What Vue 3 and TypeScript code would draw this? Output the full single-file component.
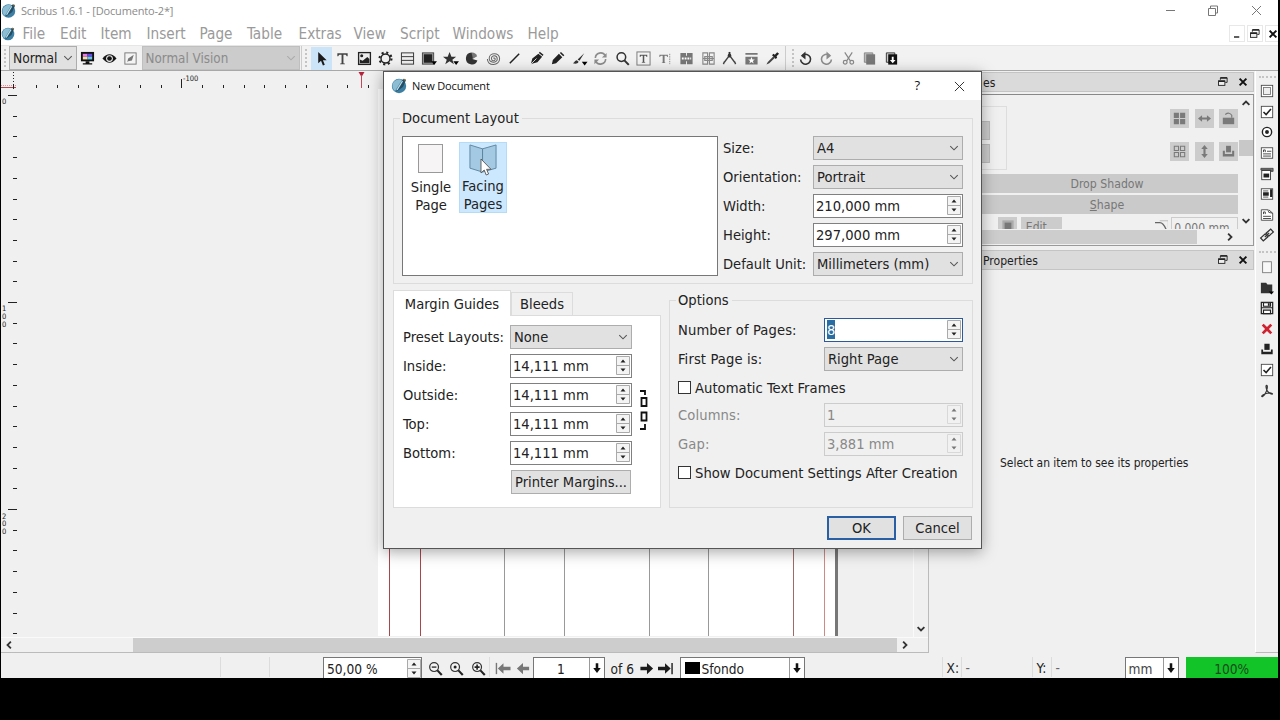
<script setup lang="ts">
const icons: Record<string, string> = {
  logo: '<circle cx="8" cy="8" r="7.2" fill="#3d7fa3"/><path d="M2 5a7 7 0 0 1 9-3L4 13A7 7 0 0 1 2 5z" fill="#8cbdd2"/><path d="M5 14L12 1l3 1-3 7z" fill="#244e66"/><path d="M6 12l5.500-9" stroke="#c4e2ea" stroke-width="1.200"/><path d="M12.500 .5l2.500 1-1 2" fill="#8a7142"/>',
  preview: '<rect x="1" y="1" width="14" height="10" fill="#111"/><path d="M3 3h5v3H3z" fill="#e879e8"/><path d="M8 3h5v3H8z" fill="#6a4be8"/><path d="M3 6h5v3H3z" fill="#f3dcaa"/><path d="M8 6h5v3H8z" fill="#65c8e8"/><path d="M6 11h4v2h3v1.500H3V13h3z" fill="#111"/>',
  eye: '<path d="M.5 8Q8-1 15.500 8 8 17 .5 8z" fill="#151515"/><circle cx="8" cy="8" r="3.600" fill="#eee"/><circle cx="8" cy="8" r="2.500" fill="#151515"/>',
  edit: '<rect x="2" y="2" width="12" height="12" fill="#f4f4f4" stroke="#777"/><path d="M4.500 12l1-4 6-4-2 6-4 1z" fill="#777"/>',
  arrow: '<path d="M4.500 1v12l3-2.600 2 5 2-.8-2-4.800h4z" fill="#1a1a1a"/>',
  text: '<path d="M2.500 2.500h11v3.200h-1c-.3-1.300-.7-1.800-2-1.800H9v8.600c0 .7.6.8 1.500.9v.7h-5v-.7c.9-.1 1.500-.2 1.500-.9V3.900H5.500c-1.300 0-1.700.5-2 1.800h-1z" fill="#444"/>',
  image: '<rect x="1.700" y="1.700" width="12.600" height="12.600" fill="#eee" stroke="#222" stroke-width="1.400"/><circle cx="5" cy="5" r="1.600" fill="#222"/><path d="M3 13V9l3 1.500 5-4 2.200 2V13z" fill="#222"/>',
  gear: '<circle cx="8" cy="8" r="4.800" fill="none" stroke="#222" stroke-width="1.500"/><circle cx="8" cy="8" r="6.400" fill="none" stroke="#222" stroke-width="2.200" stroke-dasharray="2.200 2.827"/>',
  table: '<rect x="1.500" y="2" width="13" height="12" fill="#eee" stroke="#333"/><path d="M1.500 6h13M1.500 10h13" stroke="#333"/>',
  rect: '<rect x="1.500" y="2" width="12" height="12" fill="#aaa" stroke="#444"/><rect x="3" y="3.500" width="9" height="9" fill="#222"/><path d="M11 11h6l-3 4z" fill="#000"/>',
  star: '<path d="M7 1l2 5h5l-4 3.200 1.600 5L7 11l-4.600 3.200L4 9.200 0 6h5z" fill="#333"/><path d="M11 11h6l-3 4z" fill="#000"/>',
  arc: '<path d="M8 1.700A6.300 6.300 0 1 0 14.300 10L9 8.500 11 6z" fill="#333"/><path d="M8 1.700a6 6 0 0 1 6 4L9.500 8.200z" fill="#777"/>',
  spiral: '<path d="M8 8c0-1 1.800-.8 1.800.6 0 2.600-4 2.400-4-.6C5.800 3.800 12 4 12 8.400c0 5-8.600 4.600-8.600-.6C3.400 1.400 14.500 1 14.500 8.200 14.500 12 11.500 14.500 8 14.500 4 14.500 1.500 12 1.500 8.500" fill="none" stroke="#666" stroke-width="1.100"/>',
  line: '<path d="M3 13L13 3" stroke="#222" stroke-width="1.600"/>',
  bezier: '<path d="M2 14l1.500-6L10 3l4 3-5 6-5 1.200z" fill="#222"/><path d="M2 14l6-6" stroke="#ddd"/><path d="M11 1.500l4 3.200" stroke="#222" stroke-width="1.500"/>',
  pencil: '<path d="M2 14l1-4.500L9.500 3l3.600 3.600L6.500 13zM10.500 2l1.200-1 3.600 3.600-1.200 1z" fill="#222"/>',
  brush: '<path d="M1 13c2-.2 2-3.500 4.500-3L7 11.500C6 14 3 13.800 1 13zM6 9l7-6.500L8 10.500z" fill="#333"/><path d="M10.500 11.500h6l-3 4z" fill="#000"/>',
  rotate: '<path d="M2.500 7.500A5.600 5.600 0 0 1 13 5M13.500 8.500A5.600 5.600 0 0 1 3 11" fill="none" stroke="#8c8c8c" stroke-width="1.700"/><path d="M14.500 2v5h-5zM1.500 14V9h5z" fill="#8c8c8c"/>',
  zoom: '<circle cx="6.800" cy="6.500" r="4.600" fill="none" stroke="#333" stroke-width="1.600"/><path d="M10 10l4.700 4.800" stroke="#333" stroke-width="2.200"/>',
  textbox: '<rect x="1" y="1" width="14" height="14" fill="#f4f4f4" stroke="#777"/><path d="M4 4h8v2.500h-.7c-.3-1-.5-1.400-1.500-1.400h-1v6c0 .6.4.7 1 .8v.5H6.200v-.5c.6-.1 1-.2 1-.8v-6h-1c-1 0-1.200.4-1.500 1.400H4z" fill="#555"/>',
  textedit: '<path d="M1.500 4h9v2.500h-.7c-.3-1-.5-1.400-1.500-1.400H7v6.500c0 .6.4.7 1 .8v.5H4v-.5c.6-.1 1-.2 1-.8V5.100H3.700c-1 0-1.200.4-1.500 1.400h-.7z" fill="#777"/><path d="M12.500 3v11" stroke="#888" stroke-dasharray="1.500 1"/>',
  link: '<path d="M1.500 2h6v3h1V2h6v12h-6v-3h-1v3h-6z" fill="#777"/><path d="M3 8h10" stroke="#fff" stroke-width="2" stroke-dasharray="2 1"/>',
  unlink: '<path d="M2 2h5v12H2zM9 2h5v12H9zM4 6h8v4H4zM2 8h12" fill="none" stroke="#888" stroke-width="1.200"/>',
  measure: '<path d="M8 1v4" stroke="#333" stroke-width="2"/><circle cx="8" cy="5" r="2" fill="#333"/><path d="M7 6l-4.500 6M9 6l4.500 6M2.500 11.500L1.500 14M13.500 11.500l1 2.500" stroke="#444" stroke-width="1.500"/>',
  copyprops: '<path d="M1.500 2h13v2h-13zM1.500 6h13v8.500h-13z" fill="#777"/><path d="M8 6.500l1 2.500h2.500l-2 1.700.8 2.600L8 11.800l-2.300 1.500.8-2.600-2-1.700H7z" fill="#fff"/>',
  dropper: '<path d="M9 3l1.500 1L13 1.300 15 3l-2.700 2.600L13 7l-1.500 1.500-4-4z" fill="#222"/><path d="M9 5.500l1.700 1.700L4.500 13l-3 1.500L3 11.600z" fill="#444"/>',
  undo: '<path d="M5 4.500A5.300 5.300 0 1 1 2.800 9" fill="none" stroke="#333" stroke-width="1.700"/><path d="M3 5l5-4.500V9z" fill="#333"/>',
  redo: '<path d="M11 4.500A5.300 5.300 0 1 0 13.200 9" fill="none" stroke="#8c8c8c" stroke-width="1.700"/><path d="M13 5L8 .5V9z" fill="#8c8c8c"/>',
  cut: '<path d="M4 1.500l6 9M12 1.500l-6 9" stroke="#888" stroke-width="1.300"/><circle cx="4.500" cy="12" r="2" fill="none" stroke="#888" stroke-width="1.300"/><circle cx="11.500" cy="12" r="2" fill="none" stroke="#888" stroke-width="1.300"/>',
  copy: '<path d="M2.500 2h9v10h-9z" fill="#bbb" stroke="#888"/><rect x="4.500" y="3.500" width="9.500" height="11" fill="#777"/>',
  paste: '<path d="M2.500 2h9v10h-9z" fill="#ccc" stroke="#333"/><rect x="4.500" y="3.500" width="9.500" height="11" fill="#111"/><path d="M8.300 6h2v3.500h2L9.300 13 6.300 9.500h2z" fill="#fff"/>',
  frame: '<rect x="1.500" y="1.500" width="13" height="13" fill="#fff" stroke="#444"/><rect x="4" y="4" width="8" height="8" fill="#eee" stroke="#777"/>',
  check: '<rect x="1.500" y="1.500" width="13" height="13" fill="#fff" stroke="#444"/><path d="M4 8l3 3 5.500-6.500" fill="none" stroke="#222" stroke-width="1.800"/>',
  radio: '<circle cx="8" cy="8" r="5.300" fill="#fff" stroke="#222" stroke-width="1.600"/><circle cx="8" cy="8" r="2.200" fill="#222"/>',
  field: '<rect x="1.500" y="2" width="13" height="12" fill="#fff" stroke="#444"/><path d="M4 7V4.500h2V7M8 6h5M3.500 9h9M3.500 11.500h9" fill="none" stroke="#333"/>',
  combo: '<rect x="2" y="4" width="10" height="10.500" fill="#fff" stroke="#333"/><path d="M1 1.500h14V5h-2.500V3.500H1z" fill="#777" stroke="#333" stroke-width=".8"/><path d="M4 7.500h6.500v4.500H4z" fill="#222"/>',
  listbox: '<rect x="1.500" y="2" width="13" height="12" fill="#fff" stroke="#444"/><path d="M3.500 4.500h6M3.500 11.500h6" stroke="#444"/><path d="M3.500 6h6.500v4H3.500zM11.500 2.500h2.500v9h-2.500z" fill="#222"/>',
  annot: '<path d="M1.500 2H9l1 3 4.500 1v8h-13z" fill="#fff" stroke="#444"/><path d="M4 7V4.500h2V7M3.500 9.500h9M3.500 12h9M10 2l4.500 4" stroke="#333" fill="none"/>',
  chain: '<g fill="none" stroke="#333" stroke-width="1.400"><rect x="7.500" y="3" width="7" height="4.500" transform="rotate(-42 11 5)"/><rect x="1.500" y="8.500" width="7" height="4.500" transform="rotate(-42 5 11)"/><path d="M5.500 10.500l5-5"/></g>',
  page: '<rect x="3" y="2" width="10" height="12.500" fill="#f8f8f8" stroke="#777"/>',
  folder: '<path d="M1 2h6l1.500 2H14v10H1z" fill="#333"/><path d="M10 12h6l-3 3.500z" fill="#000"/>',
  save: '<path d="M1.500 1.500h13v13h-13z" fill="#eee" stroke="#222" stroke-width="1.400"/><path d="M4 2h8v4H4zM1.500 7.700h13M4 10.500h8v4H4z" stroke="#222" fill="#fff" stroke-width="1.300"/><path d="M9 2.500h2v3H9z" fill="#222"/>',
  close: '<path d="M2 4l2.200-2L8 5.800 11.800 2 14 4l-3.800 4 3.800 4-2.200 2L8 10.200 4.200 14 2 12l3.800-4z" fill="#cf2231"/>',
  print: '<path d="M5 2h6v7H5z" fill="#222"/><path d="M1.500 8.500h2V11h9V8.500h2V14h-13z" fill="#222"/>',
  printGray: '<path d="M5 1h6v8H5z" fill="#777"/><path d="M1 7h2.500v4h9V7H15v7H1z" fill="#777"/>',
  pdf: '<path d="M7.500 1.500c1.800 0 .6 6 -1.500 9.500-1.500 2.500-3.500 4-4 3.200-.5-.9 3-3 6.500-3.700 3-.6 5.700-.3 5.800.6.1 1.200-4-.1-6-3.200C6.800 5 6.400 1.500 7.500 1.500z" fill="none" stroke="#333" stroke-width="1.300"/>',
  tiles: '<path d="M1 1h6.300v6.300H1zM8.700 1H15v6.300H8.700zM1 8.700h6.300V15H1zM8.700 8.700H15V15H8.700z" fill="#7a7a7a"/>',
  tilesOut: '<path d="M1.600 1.600h5.200v5.200H1.600zM9.200 1.600h5.200v5.200H9.200zM1.600 9.200h5.200v5.200H1.600zM9.200 9.200h5.200v5.200H9.200z" fill="none" stroke="#7a7a7a" stroke-width="1.300"/>',
  hflip: '<path d="M0 8l5-4v2.700h6V4l5 4-5 4V9.300H5V12z" fill="#7a7a7a"/>',
  vflip: '<path d="M8 0l4 5H9.300v6H12l-4 5-4-5h2.700V5H4z" fill="#7a7a7a"/>',
  lock: '<path d="M1 7h14v8H1z" fill="#7a7a7a"/><path d="M4 3q5-3.500 8 1v3" fill="none" stroke="#7a7a7a" stroke-width="1.400"/>',
  float: '<path d="M4.500 5V2.500h9v6H11" fill="none" stroke="#222" stroke-width="1.200"/><path d="M4.500 2.500h9" stroke="#222" stroke-width="2"/><rect x="2" y="6.500" width="8.500" height="6" fill="#eee" stroke="#222" stroke-width="1.200"/><path d="M2 7h8.500" stroke="#222" stroke-width="2"/>',
  xbold: '<path d="M3.500 3.500l9 9M12.500 3.500l-9 9" stroke="#111" stroke-width="2.600"/>',
  down: '<path d="M3 5.500L8 10.500l5-5" fill="none" stroke="currentColor" stroke-width="1.400"/>',
  downB: '<path d="M3.500 5.500L8 10l4.500-4.500" fill="none" stroke="#333" stroke-width="2.400"/>',
  upB: '<path d="M3.500 10.500L8 6l4.500 4.500" fill="none" stroke="#333" stroke-width="2.400"/>',
  leftB: '<path d="M10.500 3.500L6 8l4.500 4.500" fill="none" stroke="#333" stroke-width="2.400"/>',
  rightB: '<path d="M5.500 3.500L10 8l-4.500 4.500" fill="none" stroke="#333" stroke-width="2.400"/>',
  downFat: '<path d="M6.300 1.500h3.400V8h3.300L8 14.500 3 8h3.300z" fill="#111"/>',
  zoomOut: '<circle cx="6.500" cy="6.500" r="4.700" fill="#f4f4f4" stroke="#333" stroke-width="1.300"/><path d="M4 6.500h5" stroke="#333" stroke-width="1.500"/><path d="M10 10l4.700 5" stroke="#222" stroke-width="2.200"/>',
  zoomOne: '<circle cx="6.500" cy="6.500" r="4.700" fill="#f4f4f4" stroke="#333" stroke-width="1.300"/><circle cx="6.500" cy="6.500" r="1.600" fill="#222"/><path d="M10 10l4.700 5" stroke="#222" stroke-width="2.200"/>',
  zoomIn: '<circle cx="6.500" cy="6.500" r="4.700" fill="#f4f4f4" stroke="#333" stroke-width="1.300"/><path d="M3.800 6.500h5.400M6.500 3.800v5.400" stroke="#222" stroke-width="1.700"/><path d="M10 10l4.700 5" stroke="#222" stroke-width="2.200"/>',
  first: '<path d="M1 2v12" stroke="#777" stroke-width="1.500"/><path d="M2.500 8l6-5.500v3.700h7.500v3.600H8.500v3.700z" fill="#777"/>',
  prev: '<path d="M1.500 8L8 2v4.200h6.500v3.600H8V14z" fill="#777"/>',
  next: '<path d="M15 8L8.500 2v4.200H1.500v3.600h7V14z" fill="#1c1c1c"/>',
  last: '<path d="M15 2v12" stroke="#1c1c1c" stroke-width="1.500"/><path d="M13.500 8L7.500 2.500v3.700H0v3.600h7.500v3.700z" fill="#1c1c1c"/>',
}

const menus = [
  ['File', 37.5], ['Edit', 40.5], ['Item', 46], ['Insert', 53], ['Page', 47.5], ['Table', 51.5],
  ['Extras', 55], ['View', 46.5], ['Script', 52.5], ['Windows', 75], ['Help', 40],
] as [string, number][]

const tools = ['arrow', 'text', 'image', 'gear', 'table', 'rect', 'star', 'arc', 'spiral', 'line', 'bezier', 'pencil', 'brush', 'rotate', 'zoom', 'textbox', 'textedit', 'link', 'unlink', 'measure', 'copyprops', 'dropper']
const editTools = ['undo', 'redo', 'cut', 'copy', 'paste']
const pdfTools = ['frame', 'check', 'radio', 'field', 'combo', 'listbox', 'annot', 'chain']
const fileTools = ['page', 'folder', 'save', 'close', 'print', 'check', 'pdf']

interface Row { label: string; value: string; kind: 'combo' | 'spin' }
const sizeRows: Row[] = [
  { label: 'Size:', value: 'A4', kind: 'combo' },
  { label: 'Orientation:', value: 'Portrait', kind: 'combo' },
  { label: 'Width:', value: '210,000 mm', kind: 'spin' },
  { label: 'Height:', value: '297,000 mm', kind: 'spin' },
  { label: 'Default Unit:', value: 'Millimeters (mm)', kind: 'combo' },
]
const marginRows: Row[] = [
  { label: 'Preset Layouts:', value: 'None', kind: 'combo' },
  { label: 'Inside:', value: '14,111 mm', kind: 'spin' },
  { label: 'Outside:', value: '14,111 mm', kind: 'spin' },
  { label: 'Top:', value: '14,111 mm', kind: 'spin' },
  { label: 'Bottom:', value: '14,111 mm', kind: 'spin' },
]
const hTicks = Array.from({ length: 17 }, (_, i) => ({ x: Math.round(35 + i * 20.75) + 0.5, major: i === 7 }))
const vTicks = Array.from({ length: 27 }, (_, i) => ({ y: Math.round(24 + i * 20.7) + 0.5, major: i % 10 === 0 }))
const vLabels = [['0', 33], ['1', 240], ['0', 248], ['0', 255.5], ['2', 447.5], ['0', 455], ['0', 462.5]] as [string, number][]
const guides = [
  { x: 388, c: '#a8464c' }, { x: 419, c: '#a8464c' }, { x: 503, c: '#999' }, { x: 563, c: '#999' },
  { x: 648, c: '#999' }, { x: 707, c: '#999' }, { x: 792, c: '#a06a6a' }, { x: 823, c: '#cf8a85' },
]
</script>

<template>
  <div class="screen">
    <div class="window">
      <div class="titlebar">
        <svg class="ic logo" viewBox="0 0 16 16" v-html="icons.logo" />
        <span class="title">Scribus 1.6.1 - [Documento-2*]</span>
        <svg class="winbtns" viewBox="0 0 100 20" fill="none" stroke="#777">
          <path d="M6 9.500h9M48.500 7.500h7v7h-7zM50.500 7v-2h7v7h-2M92 5l9 9M101 5l-9 9" />
        </svg>
      </div>
      <div class="menubar">
        <svg class="ic logo" viewBox="0 0 16 16" v-html="icons.logo" />
        <nav>
          <span v-for="m in menus" :key="m[0]" :style="{ width: m[1] + 'px' }">{{ m[0] }}</span>
        </nav>
        <div class="mdi">
          <span><svg class="i12" viewBox="0 0 16 16"><path d="M4 12h7" stroke="#555" stroke-width="2.500" /></svg></span>
          <span><svg class="i12" viewBox="0 0 16 16" v-html="icons.float" /></span>
          <span><svg class="i12" viewBox="0 0 16 16" v-html="icons.xbold" /></span>
        </div>
      </div>
      <div class="toolbar">
        <i class="grip" />
        <div class="combo normal"><span>Normal</span><svg class="i12" viewBox="0 0 16 16" v-html="icons.down" /></div>
        <div class="tool"><svg class="ic" viewBox="0 0 16 16" v-html="icons.preview" /></div>
        <div class="tool"><svg class="ic" viewBox="0 0 16 16" v-html="icons.eye" /></div>
        <div class="tool"><svg class="ic" viewBox="0 0 16 16" v-html="icons.edit" /></div>
        <div class="combo vision"><span>Normal Vision</span><svg class="i12" viewBox="0 0 16 16" v-html="icons.down" /></div>
        <i class="sep" /><i class="grip g2" />
        <div v-for="t in tools" :key="t" class="tool" :class="{ active: t === 'arrow' }">
          <svg class="ic" viewBox="0 0 16 16" v-html="icons[t]" />
        </div>
        <i class="sep s2" /><i class="grip g3" />
        <div v-for="t in editTools" :key="t" class="tool"><svg class="ic" viewBox="0 0 16 16" v-html="icons[t]" /></div>
      </div>

      <div class="main">
        <div class="canvas">
          <div class="view">
            <svg class="drawing" width="912" height="565" viewBox="0 0 912 565">
              <rect x="377" y="0" width="458" height="565" fill="#fff" />
              <rect x="834" y="0" width="3" height="565" fill="#777" />
              <rect v-for="g in guides" :key="g.x" :x="g.x" y="0" width="1" height="565" :fill="g.c" />
              <rect x="0" y="0" width="912" height="18" fill="#f0f0f0" />
              <path d="M12.500 1v16" stroke="#222" stroke-dasharray="1 2" />
              <path d="M0 14.500h15" stroke="#d89a9a" stroke-dasharray="1 1" />
              <path d="M0 16.500h15" stroke="#b8474d" />
              <path d="M12.500 13v5" stroke="#222" />
              <path v-for="t in hTicks" :key="t.x" :d="`M${t.x} ${t.major ? 8 : 14}v${t.major ? 9 : 3}`" stroke="#222" />
              <text x="182" y="10" font-size="7.500" fill="#222">-100</text>
              <path d="M357.500 1h6l-3 5z" fill="#b3233b" /><path d="M360.500 4v13" stroke="#c4475a" />
              <path v-for="t in vTicks" :key="t.y" :d="`M${t.major ? 7 : 12} ${t.y}h${t.major ? 9 : 4}`" stroke="#222" />
              <text v-for="(l, i) in vLabels" :key="i" x="1" :y="l[1]" font-size="7.500" fill="#222">{{ l[0] }}</text>
            </svg>
            <div class="vscroll"><svg class="i12" viewBox="0 0 16 16" v-html="icons.downB" /></div>
          </div>
          <div class="hscroll">
            <svg class="i12" viewBox="0 0 16 16" v-html="icons.leftB" /><i />
            <svg class="i12" viewBox="0 0 16 16" v-html="icons.rightB" />
          </div>
        </div>

        <div class="docks">
          <div class="dockhead"><span>es</span>
            <svg class="i12" viewBox="0 0 16 16" v-html="icons.float" /><svg class="i12" viewBox="0 0 16 16" v-html="icons.xbold" />
          </div>
          <div class="dockbody">
            <div class="dockcontent">
              <div class="xyz">
                <div class="groupbox"><span /><span /></div>
                <div class="btngrid">
                  <span v-for="b in ['tiles', 'hflip', 'lock', 'tilesOut', 'vflip', 'printGray']" :key="b"><svg class="ic" viewBox="0 0 16 16" v-html="icons[b]" /></span>
                </div>
              </div>
              <div class="section">Drop Shadow</div>
              <div class="section"><u>S</u>hape</div>
              <div class="shaperow">
                <b><svg class="i12" viewBox="0 0 16 16"><rect x="2" y="2" width="12" height="12" fill="#777" stroke="#aaa" stroke-width="3" /></svg></b>
                <b class="edit">Edit...</b>
                <svg class="curve" viewBox="0 0 14 12"><path d="M0 2.500h5q4 0 7 8" fill="none" stroke="#666" stroke-width="1.400" /><path d="M5 .5h9V8" fill="none" stroke="#bbb" /></svg>
                <div class="radius">0,000 mm</div>
              </div>
            </div>
            <div class="dvs"><svg class="i12" viewBox="0 0 16 16" v-html="icons.upB" /><i /><svg class="i12" viewBox="0 0 16 16" v-html="icons.downB" /></div>
            <div class="dhs"><i /><svg class="i12" viewBox="0 0 16 16" v-html="icons.rightB" /></div>
          </div>
          <div class="dockhead second"><span>Properties</span>
            <svg class="i12" viewBox="0 0 16 16" v-html="icons.float" /><svg class="i12" viewBox="0 0 16 16" v-html="icons.xbold" />
          </div>
          <div class="empty">Select an item to see its properties</div>
        </div>

        <div class="side">
          <i class="hgrip" />
          <div v-for="t in pdfTools" :key="t" class="stool"><svg class="ic" viewBox="0 0 16 16" v-html="icons[t]" /></div>
          <i class="hgrip div" />
          <div v-for="t in fileTools" :key="t" class="stool"><svg class="ic" viewBox="0 0 16 16" v-html="icons[t]" /></div>
        </div>
      </div>

      <div class="status">
        <i class="blank a" /><i class="blank b" />
        <div class="sbox zoomv"><span>50,00 %</span>
          <svg class="spin" viewBox="0 0 14 19"><path d="M.5.5h13v18H.5zM.5 9.500h13" fill="#f4f4f4" stroke="#aaa" /><path d="M4.500 6.500h5L7 3.500zM4.500 12.500h5L7 15.500z" fill="#222" /></svg>
        </div>
        <svg class="ic sz" viewBox="0 0 16 16" v-html="icons.zoomOut" />
        <svg class="ic sz" viewBox="0 0 16 16" v-html="icons.zoomOne" />
        <svg class="ic sz" viewBox="0 0 16 16" v-html="icons.zoomIn" />
        <i class="ssep" />
        <svg class="ic nav" viewBox="0 0 16 16" v-html="icons.first" />
        <svg class="ic nav" viewBox="0 0 16 16" v-html="icons.prev" />
        <div class="sbox pageno"><span>1</span><em><svg class="i12" viewBox="0 0 16 16" v-html="icons.downFat" /></em></div>
        <span class="of">of 6</span>
        <svg class="ic nx" viewBox="0 0 16 16" v-html="icons.next" />
        <svg class="ic nx" viewBox="0 0 16 16" v-html="icons.last" />
        <div class="sbox layer"><i /><span>Sfondo</span><em><svg class="i12" viewBox="0 0 16 16" v-html="icons.downFat" /></em></div>
        <div class="coords"><span class="k">X:</span><span>-</span><span class="k">Y:</span><span>-</span></div>
        <div class="sbox unit"><span>mm</span><em><svg class="i12" viewBox="0 0 16 16" v-html="icons.downFat" /></em></div>
        <div class="progress">100%</div>
      </div>
    </div>

    <div class="dialog">
      <div class="dtitle">
        <svg class="ic logo" viewBox="0 0 16 16" v-html="icons.logo" />
        <span class="dt">New Document</span><span class="q">?</span>
        <svg class="x" viewBox="0 0 12 12"><path d="M1 1l10 10M11 1L1 11" stroke="#222" /></svg>
      </div>
      <fieldset class="layout">
        <legend>Document Layout</legend>
        <div class="list">
          <div class="item"><svg viewBox="0 0 40 30" width="40" height="30"><rect x="7.500" y=".5" width="24" height="28" fill="#f6f4f5" stroke="#999" /></svg><span>Single<br>Page</span></div>
          <div class="item sel"><svg viewBox="0 0 40 30" width="40" height="30"><path d="M6.500 1l13 4v24l-13-4zM33.500 1l-14 4v24l14-4z" fill="#a3cae2" stroke="#5f87a0" /></svg><span>Facing<br>Pages</span>
            <svg class="cursor" viewBox="0 0 12 18"><path d="M1 1v14l3.200-3 2 5 2.400-1-2-4.700H11z" fill="#fff" stroke="#555" stroke-width=".9" /></svg>
          </div>
        </div>
        <div class="form">
          <div v-for="r in sizeRows" :key="r.label" class="row">
            <label>{{ r.label }}</label>
            <div :class="r.kind" class="f150"><span>{{ r.value }}</span>
              <svg v-if="r.kind === 'combo'" class="i12" viewBox="0 0 16 16" v-html="icons.down" />
              <svg v-else class="spin" viewBox="0 0 14 19"><path d="M.5.5h13v18H.5zM.5 9.500h13" fill="#f4f4f4" stroke="#aaa" /><path d="M4.500 6.500h5L7 3.500zM4.500 12.500h5L7 15.500z" fill="#222" /></svg>
            </div>
          </div>
        </div>
      </fieldset>
      <div class="lower">
        <div class="tabs">
          <div class="tabrow"><div class="tab on">Margin Guides</div><div class="tab">Bleeds</div></div>
          <div class="pane">
            <div class="form">
              <div v-for="r in marginRows" :key="r.label" class="row">
                <label>{{ r.label }}</label>
                <div :class="r.kind" class="f122"><span>{{ r.value }}</span>
                  <svg v-if="r.kind === 'combo'" class="i12" viewBox="0 0 16 16" v-html="icons.down" />
                  <svg v-else class="spin" viewBox="0 0 14 19"><path d="M.5.5h13v18H.5zM.5 9.500h13" fill="#f4f4f4" stroke="#aaa" /><path d="M4.500 6.500h5L7 3.500zM4.500 12.500h5L7 15.500z" fill="#222" /></svg>
                </div>
              </div>
              <button class="pm">Printer Margins...</button>
            </div>
            <svg class="lnk" viewBox="0 0 10 42"><path d="M1 2h5v4M2.500 9h5v8h-5zM2.500 23.500h5v8h-5zM1 40h5v-5" fill="none" stroke="#111" stroke-width="1.800" /></svg>
          </div>
        </div>
        <fieldset class="options">
          <legend>Options</legend>
          <div class="row"><label>Number of Pages:</label>
            <div class="spin-f f139 focus"><span><mark>8</mark></span><svg class="spin" viewBox="0 0 14 19"><path d="M.5.5h13v18H.5zM.5 9.500h13" fill="#f4f4f4" stroke="#aaa" /><path d="M4.500 6.500h5L7 3.500zM4.500 12.500h5L7 15.500z" fill="#222" /></svg></div>
          </div>
          <div class="row"><label>First Page is:</label><div class="combo f139"><span>Right Page</span><svg class="i12" viewBox="0 0 16 16" v-html="icons.down" /></div></div>
          <div class="chk"><i /><span>Automatic Text Frames</span></div>
          <div class="row dis"><label>Columns:</label><div class="spin-f f139"><span>1</span><svg class="spin" viewBox="0 0 14 19"><path d="M.5.500h13v18H.5z" fill="#f1f1f1" stroke="#d8d8d8" /><path d="M4.500 6.500h5L7 3.500zM4.500 12.500h5L7 15.500z" fill="#777" /></svg></div></div>
          <div class="row dis"><label>Gap:</label><div class="spin-f f139"><span>3,881 mm</span><svg class="spin" viewBox="0 0 14 19"><path d="M.5.500h13v18H.5z" fill="#f1f1f1" stroke="#d8d8d8" /><path d="M4.500 6.500h5L7 3.500zM4.500 12.500h5L7 15.500z" fill="#777" /></svg></div></div>
          <div class="chk"><i /><span>Show Document Settings After Creation</span></div>
        </fieldset>
      </div>
      <div class="actions"><button class="ok">OK</button><button>Cancel</button></div>
    </div>
  </div>
</template>

<style>
body { margin: 0; background: #000; }
</style>

<style scoped>
* { box-sizing: border-box; }
.screen { position: relative; width: 1280px; height: 720px; background: #000; overflow: hidden; font-family: "DejaVu Sans Condensed", "Noto Sans", sans-serif; font-size: 14.6px; color: #222; white-space: nowrap; }
.window { margin: 0 2px 0 1px; height: 678px; background: #f0f0f0; display: flex; flex-direction: column; overflow: hidden; }
.ic { width: 16px; height: 16px; flex: none; display: block; overflow: visible; }
.i12 { width: 12px; height: 12px; flex: none; display: block; }
.titlebar { height: 22px; background: #fff; display: flex; align-items: center; color: #8a8a8a; font: 11px "Open Sans", sans-serif; letter-spacing: -0.17px; }
.titlebar .logo { width: 15px; margin-right: 5px; }
.title { padding-bottom: 1px; }
.winbtns { width: 100px; height: 20px; margin-left: auto; margin-right: 18px; overflow: visible; }
.menubar { height: 23px; background: #fff; display: flex; align-items: center; color: #9a9a9a; font-size: 15.2px; }
.menubar .logo { width: 14px; margin-right: 7.5px; }
nav { display: flex; }
.mdi { margin-left: auto; display: flex; gap: 2px; margin-right: -3px; }
.mdi span { width: 16px; height: 17px; border: 1px solid #e8e8e8; display: flex; align-items: center; justify-content: center; }
.toolbar { height: 26px; background: #f2f2f2; border-top: 1px solid #e6e6e6; border-bottom: 1px solid #a8a8a8; display: flex; align-items: center; flex: none; }
.grip { width: 3px; height: 18px; margin: 0 2px 0 3px; border-left: 2px dotted #c4c4c4; flex: none; }
.combo { display: flex; align-items: center; justify-content: space-between; background: #e1e1e1; border: 1px solid #adadad; padding: 0 2px 0 3px; height: 24px; flex: none; color: #222; }
.combo svg { color: #555; }
.combo.normal { width: 68px; font-size: 13.7px; }
.combo.vision { width: 158px; background: #ccc; border-color: #bfbfbf; color: #8b8b8b; font-size: 13.3px; }
.combo.vision svg { color: #aaa; }
.tool { width: 21.5px; height: 23px; display: flex; align-items: center; justify-content: center; flex: none; }
.tool .ic { width: 15px; height: 15px; }
.tool.active { background: #cce4f7; }
.sep { width: 1px; height: 24px; background: #ccc; margin-left: 1px; flex: none; }
.g2 { margin: 0 3px 0 3px; }
.s2 { margin-left: 1px; }
.g3 { margin: 0 0 0 6px; }
.main { display: flex; height: 582px; flex: none; }
.canvas { width: 928px; border-right: 1px solid #bbb; border-bottom: 1px solid #bbb; flex: none; }
.view { display: flex; height: 566px; }
.drawing { display: block; flex: none; }
.drawing text { font-family: "DejaVu Sans Condensed", sans-serif; }
.vscroll { width: 15px; border-left: 1px solid #fafafa; display: flex; flex-direction: column; justify-content: flex-end; align-items: center; padding-bottom: 2px; }
.hscroll { height: 15px; display: flex; align-items: center; border-top: 1px solid #fafafa; padding-left: 2px; }
.hscroll i { height: 14px; width: 764px; margin-left: 118px; background: #cdcdcd; margin-right: 2px; }
.docks { width: 325px; flex: none; display: flex; flex-direction: column; padding-top: 1px; font-size: 12px; }
.dockhead { height: 20px; background: #dadada; border: 1px solid #c4c4c4; display: flex; align-items: center; padding: 0 4px 0 53px; flex: none; font-size: 12.1px; }
.dockhead span { flex: 1; padding-top: 1px; }
.dockhead svg + svg { margin-left: 8px; }
.dockhead.second { margin-top: 4px; }
.dockbody { margin-top: 2px; height: 152px; border: 1px solid #999; border-top-color: #888; display: grid; grid-template: 134px 16px / 308px 15px; flex: none; }
.dockcontent { overflow: hidden; height: 134px; }
.xyz { height: 79px; display: flex; justify-content: space-between; }
.groupbox { width: 77px; height: 64px; margin-top: 11px; border: 1px solid #ddd; display: flex; flex-direction: column; align-items: flex-end; padding: 14px 16px 0 0; gap: 4px; }
.groupbox span { width: 20px; height: 19px; background: #ccc; border: 1px solid #bbb; flex: none; }
.btngrid { display: grid; grid-template-columns: repeat(3, 19px); grid-auto-rows: 19px; gap: 14px 5.5px; margin-top: 14px; }
.btngrid span { background: #ccc; display: flex; align-items: center; justify-content: center; }
.btngrid .ic { width: 13px; height: 13px; }
.section { height: 19px; background: #cacaca; margin-bottom: 2px; text-align: center; line-height: 20px; color: #777; font-size: 12.2px; padding-left: 46px; }
.shaperow { display: flex; padding-left: 68px; margin-top: 3px; height: 20px; }
.shaperow b { width: 20px; height: 20px; background: #ccc; display: flex; justify-content: center; padding-top: 3px; font-weight: normal; color: #777; margin-right: 4px; }
.shaperow .edit { width: 43px; }
.curve { width: 14px; height: 12px; margin: 3px 3px 0 89px; }
.radius { border: 1px solid #ccc; width: 70px; height: 22px; padding: 3px 2px; color: #777; }
.dvs { display: flex; flex-direction: column; align-items: center; padding: 2px 0; }
.dvs i { width: 14px; height: 16px; background: #c8c8c8; margin: 31px 0 auto; }
.dhs { grid-column: 1 / 3; display: flex; align-items: center; }
.dhs i { width: 267px; height: 14px; background: #cdcdcd; margin-right: 27px; }
.empty { flex: 1; padding: 186px 0 0 71px; font-size: 11.95px; }
.side { width: 23px; margin-left: 1px; border-left: 1px solid #fff; border-bottom: 1px solid #bbb; display: flex; flex-direction: column; align-items: center; padding-top: 5px; }
.hgrip { width: 17px; height: 2px; border-top: 2px dotted #c4c4c4; margin-bottom: 3px; flex: none; }
.hgrip.div { margin-top: 5px; margin-bottom: 4px; }
.stool { height: 20.6px; display: flex; align-items: center; flex: none; }
.stool .ic { width: 14px; height: 14px; }
.status { height: 25px; display: flex; padding-top: 4px; flex: none; overflow: hidden; align-items: flex-start; }
.blank { height: 20px; border-right: 1px solid #dcdcdc; flex: none; }
.blank.a { width: 220px; } .blank.b { width: 49px; margin-right: 53px; }
.sbox { height: 24px; background: #fff; border: 1px solid #777; display: flex; align-items: center; flex: none; font-size: 13.6px; }
.sbox span { padding-bottom: 1px; }
.sbox em { width: 15px; height: 22px; border-left: 1px solid #999; display: flex; align-items: center; justify-content: center; padding-bottom: 2px; }
.zoomv { width: 99px; padding: 0 0 0 3px; justify-content: space-between; margin-right: 2px; }
.zoomv .spin { margin-bottom: 1px; }
.sz { width: 15px; height: 15px; margin: 3.5px 3px 0 3.5px; }
.ssep { width: 1px; height: 20px; background: #ddd; margin: 0 5px 0 0; flex: none; }
.nav { width: 16px; height: 15px; margin: 3.5px 4px 0 0; }
.pageno { width: 72px; margin-left: -2px; } .pageno span { flex: 1; text-align: center; }
.of { padding: 4px 0 0 6px; font-size: 13.6px; width: 33px; flex: none; }
.nx { width: 15px; height: 15px; margin: 3.5px 3px 0 1px; }
.layer { width: 125px; margin-left: 4px; } .layer i { width: 15px; height: 12px; background: #000; margin: 0 2px 2px 4px; } .layer span { flex: 1; }
.coords { display: flex; margin-left: 137px; height: 20px; line-height: 23px; font-size: 13.6px; }
.coords span { width: 71px; border-left: 1px solid #dcdcdc; padding-left: 4px; color: #666; }
.coords .k { width: 19px; color: #222; }
.unit { width: 54px; margin-left: 3px; } .unit span { flex: 1; padding-left: 3px; color: #444; }
.progress { flex: 1; margin-left: 7px; height: 21px; background: #12c427; color: #1b4a20; text-align: center; line-height: 24px; font-size: 13.6px; }
.dialog { position: absolute; left: 383px; top: 71px; width: 599px; height: 478px; background: #f0f0f0; border: 1px solid #555; box-shadow: 0 3px 14px rgba(0, 0, 0, .35); display: flex; flex-direction: column; }
.dtitle { height: 28px; background: #fff; display: flex; align-items: center; padding: 0 16px 0 7px; flex: none; font: 11px "Open Sans", sans-serif; letter-spacing: -0.15px; color: #111; }
.dt { margin-left: 5px; flex: 1; padding-bottom: 1px; } .q { font-size: 13px; margin-right: 34px; padding-bottom: 2px; } .x { width: 11px; height: 11px; }
fieldset { margin: 0; padding: 0; border: 1px solid #dcdcdc; min-width: 0; }
legend { padding: 0 3px 0 2px; margin-left: -2px; height: 18px; line-height: 18px; }
.layout { margin: 9px 8px 0 9px; height: 175px; display: grid; grid-template-columns: 316px 1fr; column-gap: 5px; padding: 9px 0 0 8px; align-content: start; }
.list { height: 140px; border: 1px solid #777; background: #fff; display: flex; padding: 5px 5px 5px 4px; gap: 4px; align-items: flex-start; }
.item { position: relative; width: 48px; height: 71px; display: flex; flex-direction: column; align-items: center; text-align: center; line-height: 17.5px; padding-top: 2px; }
.item span { margin-top: 4px; }
.item.sel { background: #cce8ff; border: 1px solid #b5dcf5; padding-top: 1px; }
.cursor { position: absolute; left: 20px; top: 15px; width: 12px; height: 18px; }
.row { display: flex; align-items: center; height: 23px; margin-bottom: 6px; }
.row label, .row span { padding-bottom: 1px; }
.layout .row label { width: 90px; }
.f150 { width: 150px; } .f122 { width: 122px; } .f139 { width: 139px; }
.row .combo, .row .spin-f, div.spin { height: 24px; }
div.spin, .spin-f { display: flex; align-items: center; justify-content: space-between; background: #fff; border: 1px solid #808080; padding: 0 1px 0 2px; flex: none; }
svg.spin { width: 14px; height: 19px; flex: none; display: block; }
.lower { display: flex; margin: 7px 8px 0 9px; justify-content: space-between; height: 217px; }
.tabs { width: 268px; }
.tabrow { display: flex; align-items: flex-end; height: 24px; }
.tab { width: 62px; height: 23px; border: 1px solid #dcdcdc; border-bottom: 0; text-align: center; line-height: 22px; }
.tab.on { width: 118px; height: 26px; background: #fff; line-height: 25px; margin-bottom: -1px; z-index: 1; }
.pane { height: 193px; background: #fff; border: 1px solid #dcdcdc; padding: 9px 0 0 9px; display: flex; }
.pane .row label { width: 107px; }
button { font: inherit; color: inherit; background: #e1e1e1; border: 1px solid #adadad; padding: 0; height: 24px; }
.pm { display: block; width: 120px; margin-left: 108px; margin-top: 1px; padding-bottom: 1px; }
.lnk { width: 10px; height: 42px; margin: 64px 0 0 7px; }
.options { width: 304px; padding: 9px 0 0 8px; height: 217px; }
.options .row label { width: 146px; letter-spacing: .12px; }
.focus { border-color: #2a5a9c; }
mark { background: #2a6da3; color: #fff; padding: 1px 0; }
.chk { display: flex; align-items: center; height: 17px; margin: 9px 0 7px; font-size: 14.7px; }
.chk i { width: 13px; height: 13px; border: 1px solid #333; background: #fff; margin-right: 4px; }
.dis { color: #888; } .dis .spin-f { background: #f0f0f0; border-color: #ccc; }
.actions { display: flex; justify-content: flex-end; gap: 7px; margin: 8px 9px 0; }
.actions button { width: 69px; padding-bottom: 1px; } .actions .ok { border: 2px solid #2a5fa5; }
</style>
